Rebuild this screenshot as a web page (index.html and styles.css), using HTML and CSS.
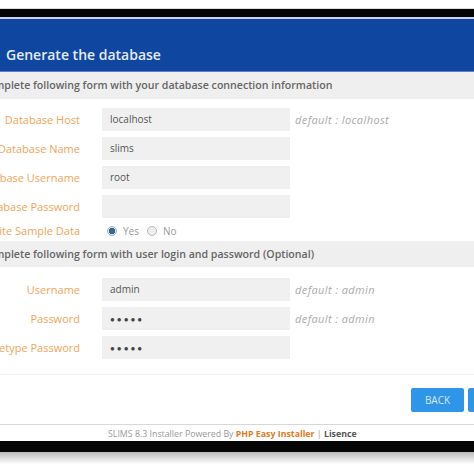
FILE: index.html
```html
<!DOCTYPE html>
<html>
<head>
<meta charset="utf-8">
<link rel="stylesheet" href="styles.css">
</head>
<body>
<div class="page">
  <div class="topgap"></div>
  <div class="blackbar"></div>
  <div class="header"><span class="title">Generate the database</span></div>
  <div class="subhead">Complete following form with your database connection information</div>
  <div class="form first">
    <div class="row"><label>Database Host</label><div class="input">localhost</div><span class="hint">default : localhost</span></div>
    <div class="row"><label>Database Name</label><div class="input">slims</div></div>
    <div class="row"><label>Database Username</label><div class="input">root</div></div>
    <div class="row"><label>Database Password</label><div class="input"></div></div>
    <div class="row radio-row"><label>Write Sample Data</label>
      <div class="radios">
        <span class="radio checked"></span><span class="rtext">Yes</span>
        <span class="radio"></span><span class="rtext">No</span>
      </div>
    </div>
  </div>
  <div class="subhead second">Complete following form with user login and password (Optional)</div>
  <div class="form second">
    <div class="row"><label>Username</label><div class="input">admin</div><span class="hint">default : admin</span></div>
    <div class="row"><label>Password</label><div class="input dots">●●●●●</div><span class="hint">default : admin</span></div>
    <div class="row"><label>Retype Password</label><div class="input dots">●●●●●</div></div>
  </div>
  <div class="actions">
    <button class="btn">BACK</button>
    <button class="btn">NEXT</button>
  </div>
  <div class="footer">SLIMS 8.3 Installer Powered By <b class="brand">PHP Easy Installer</b> | <b class="lic">Lisence</b></div>
  <div class="blackbar bottom"></div>
  <div class="shadow"></div>
</div>
</body>
</html>
```
FILE: styles.css
```css
html, body {
  margin: 0;
  padding: 0;
  background: #ffffff;
  overflow: hidden;
  width: 474px;
  height: 474px;
}
body {
  font-family: "Open Sans", "Liberation Sans", sans-serif;
}
.page {
  margin-left: -22px;
  width: 560px;
  display: flex;
  flex-direction: column;
}
.topgap {
  height: 8px;
  border-bottom: 1px solid #dcdcdc;
}
.blackbar {
  height: 8px;
  background: #050505;
  border-bottom: 2px solid #c9d4ea;
}
.header {
  height: 53px;
  background: #0f46a0;
  display: flex;
  align-items: flex-end;
  padding-left: 28px;
  padding-bottom: 6px;
  box-sizing: border-box;
  border-bottom: 1px solid #5b7fc0;
}
.title {
  color: #e3ebf7;
  font-size: 14px;
  font-weight: 600;
  line-height: 20px;
}
.subhead {
  height: 27px;
  background: #efefef;
  color: #666;
  font-size: 10.6px;
  font-weight: 600;
  line-height: 27px;
  padding-left: 3px;
  white-space: nowrap;
}
.subhead.second {
  height: 26px;
  line-height: 26px;
  margin-top: 4px;
}
.form {
  display: flex;
  flex-direction: column;
  gap: 6px;
  padding-top: 9px;
}
.form.second {
  padding-top: 11px;
}
.row {
  display: flex;
  align-items: center;
  height: 23px;
}
.row label {
  width: 102px;
  flex: none;
  color: #f2a458;
  font-size: 11px;
  white-space: nowrap;
  display: flex;
  justify-content: flex-end;
}
.input {
  margin-left: 22px;
  width: 188px;
  height: 23px;
  background: #f0f0f0;
  color: #555;
  font-size: 10px;
  line-height: 23px;
  padding-left: 8px;
  box-sizing: border-box;
  flex: none;
}
.input.dots {
  font-size: 8px;
  letter-spacing: 2px;
  color: #444;
}
.hint {
  margin-left: 5px;
  color: #aaa;
  font-style: italic;
  font-size: 11px;
  letter-spacing: 0.4px;
}
.radio-row {
  height: 13px;
}
.radios {
  margin-left: 27px;
  display: flex;
  align-items: center;
}
.radio {
  width: 8px;
  height: 8px;
  border-radius: 50%;
  border: 1px solid #b8b8b8;
  background: #eee;
  box-sizing: content-box;
}
.radio.checked {
  border-color: #9fb3c8;
  background: radial-gradient(circle, #3f6384 0 3px, #dfe8f0 3.5px);
}
.rtext {
  color: #999;
  font-size: 10px;
  margin-left: 6px;
  margin-right: 8px;
}
.actions {
  margin-top: 15px;
  border-top: 1px solid #f1f1f1;
  border-bottom: 1px solid #d8d8d8;
  padding: 13px 0 12px 433px;
  display: flex;
  gap: 4px;
}
.btn {
  width: 53px;
  height: 24px;
  border: none;
  border-radius: 2px;
  background: #2e95e8;
  color: #d6e9fb;
  font-family: "Open Sans", "Liberation Sans", sans-serif;
  font-size: 10px;
  padding: 0;
  flex: none;
}
.footer {
  height: 16px;
  line-height: 18px;
  padding-left: 130px;
  font-size: 8.8px;
  color: #9a9a9a;
  white-space: nowrap;
}
.brand {
  color: #e07a1c;
  font-weight: 700;
}
.lic {
  color: #555;
  font-weight: 700;
}
.blackbar.bottom {
  height: 11px;
  border-bottom: none;
}
.shadow {
  height: 12px;
  background: linear-gradient(#8a8a8a, #ffffff);
  opacity: 0.6;
}
```
